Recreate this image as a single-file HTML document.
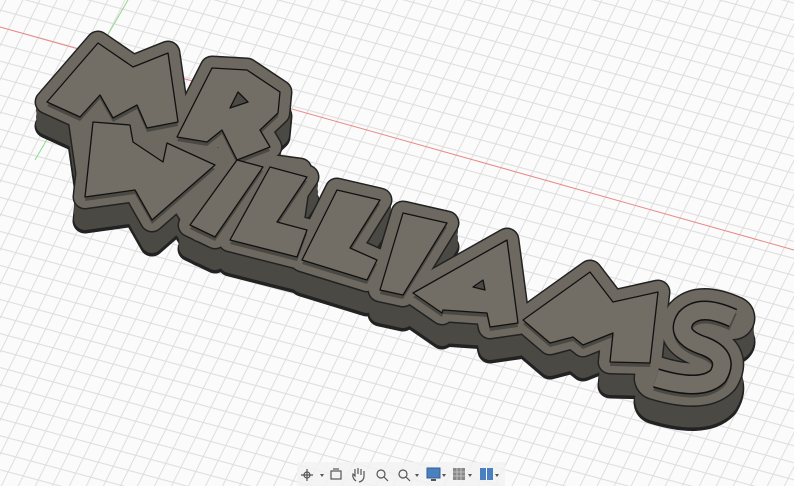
<!DOCTYPE html>
<html><head><meta charset="utf-8"><style>
html,body{margin:0;padding:0;width:794px;height:486px;overflow:hidden;background:#fbfbfb}
svg{display:block}
</style></head><body>
<svg width="794" height="486" viewBox="0 0 794 486" xmlns="http://www.w3.org/2000/svg">
<defs>
<pattern id="g" width="15" height="15" patternUnits="userSpaceOnUse" patternTransform="matrix(1,0.27,-0.5,1,128,27)">
<path d="M0 0.5H15M0.5 0V15" stroke="#dedede" stroke-width="1" fill="none"/>
</pattern>
<g id="L">
<path d="M47,102 L98,43 L133,67 L168,53 L178,122 L147,128 L137,105 L113,118 L100,95 L80,117Z"/>
<path d="M177,137 L212,68 L247,70 L280,92 L278,113 L260,130 L270,147 L237,160 L222,130 L207,142Z"/>
<path d="M85,197 L93,122 L130,125 L133,142 L163,162 L167,143 L215,165 L152,220 L135,190Z"/>
<path d="M190,225 L237,160 L263,167 L215,237Z"/>
<path d="M230,240 L270,167 L307,177 L277,222 L307,230 L297,257Z"/>
<path d="M302,260 L337,190 L380,200 L350,248 L377,260 L367,280Z"/>
<path d="M380,290 L403,213 L447,223 L403,295Z"/>
<path d="M413,293 L507,240 L518,323 L490,327 L487,313 L443,310 L442,313Z"/>
<path d="M523,320 L590,272 L613,302 L658,292 L650,363 L610,362 L613,333 L583,345 L573,337 L550,343Z"/>
<path d="M80,120 L180,120 L180,140 L90,190Z M150,150 L300,170 L290,240 L200,230Z"/>
</g>
<path id="S" d="M733,318 Q700,303 686,318 Q674,336 704,346 Q730,356 718,376 Q702,392 656,378" fill="none"/>
</defs>
<rect width="794" height="486" fill="#fbfbfb"/>
<rect width="794" height="486" fill="url(#g)"/>
<line x1="0" y1="27" x2="794" y2="250" stroke="#e88a8a" stroke-width="1"/>
<line x1="128" y1="0" x2="35" y2="160" stroke="#8fd88f" stroke-width="1"/>

<g stroke-linejoin="round" stroke-linecap="round">
<g transform="translate(0,24)" fill="#222" stroke="#222">
<use href="#L" stroke-width="25"/><use href="#S" stroke-width="45"/></g>
<g transform="translate(0,22)" fill="#4b4943" stroke="#4b4943">
<use href="#L" stroke-width="22"/><use href="#S" stroke-width="42"/></g>
<g transform="translate(0,15)" fill="#4b4943" stroke="#4b4943">
<use href="#L" stroke-width="22"/><use href="#S" stroke-width="42"/></g>
<g transform="translate(0,8)" fill="#4b4943" stroke="#4b4943">
<use href="#L" stroke-width="22"/><use href="#S" stroke-width="42"/></g>
<g transform="translate(0,2)" fill="#4b4943" stroke="#4b4943">
<use href="#L" stroke-width="22"/><use href="#S" stroke-width="42"/></g>
<g fill="#222" stroke="#222">
<use href="#L" stroke-width="25"/><use href="#S" stroke-width="45"/></g>
<g fill="#6d6960" stroke="#6d6960">
<use href="#L" stroke-width="22"/><use href="#S" stroke-width="42"/></g>
</g>

<g transform="translate(0,4)" fill="#4b4943">
<path d="M47,102 L98,43 L133,67 L168,53 L178,122 L147,128 L137,105 L113,118 L100,95 L80,117Z"/>
<path d="M177,137 L212,68 L247,70 L280,92 L278,113 L260,130 L270,147 L237,160 L222,130 L207,142Z"/>
<path d="M85,197 L93,122 L130,125 L133,142 L163,162 L167,143 L215,165 L152,220 L135,190Z"/>
<path d="M190,225 L237,160 L263,167 L215,237Z"/>
<path d="M230,240 L270,167 L307,177 L277,222 L307,230 L297,257Z"/>
<path d="M302,260 L337,190 L380,200 L350,248 L377,260 L367,280Z"/>
<path d="M380,290 L403,213 L447,223 L403,295Z"/>
<path d="M413,293 L507,240 L518,323 L490,327 L487,313 L443,310 L442,313Z"/>
<path d="M523,320 L590,272 L613,302 L658,292 L650,363 L610,362 L613,333 L583,345 L573,337 L550,343Z"/>
<use href="#S" stroke="#4b4943" stroke-width="18"/>
</g>
<use href="#S" stroke="#111" stroke-width="20" stroke-linecap="butt"/>
<use href="#S" stroke="#726e65" stroke-width="17" stroke-linecap="butt"/>
<g fill="#726e65" stroke="#111" stroke-width="1.3" stroke-linejoin="round">
<path d="M47,102 L98,43 L133,67 L168,53 L178,122 L147,128 L137,105 L113,118 L100,95 L80,117Z"/>
<path d="M177,137 L212,68 L247,70 L280,92 L278,113 L260,130 L270,147 L237,160 L222,130 L207,142Z M230,108 L238,92 L248,102Z" fill-rule="evenodd"/>
<path d="M85,197 L93,122 L130,125 L133,142 L163,162 L167,143 L215,165 L152,220 L135,190Z"/>
<path d="M190,225 L237,160 L263,167 L215,237Z"/>
<path d="M230,240 L270,167 L307,177 L277,222 L307,230 L297,257Z"/>
<path d="M302,260 L337,190 L380,200 L350,248 L377,260 L367,280Z"/>
<path d="M380,290 L403,213 L447,223 L403,295Z"/>
<path d="M413,293 L507,240 L518,323 L490,327 L487,313 L443,310 L442,313Z M473,287 L483,280 L485,290Z" fill-rule="evenodd"/>
<path d="M523,320 L590,272 L613,302 L658,292 L650,363 L610,362 L613,333 L583,345 L573,337 L550,343Z"/>
</g>

<!-- toolbar -->
<rect x="297" y="462" width="208" height="24" fill="#f2f2f2" opacity="0.85"/>
<g fill="none" stroke="#555" stroke-width="1.2">
<path d="M307,469 V481 M301,475 H313"/><circle cx="307" cy="475" r="3"/>
<rect x="331" y="471" width="10" height="8"/><path d="M333,469 h6"/>
<path d="M356,481 q-4,-3 -3,-7 l2,2 v-7 M358,468 v6 M361,469 v6 M364,471 v5 q0,5 -5,6"/>
<circle cx="381" cy="474" r="4"/><path d="M384,477 l4,4"/>
<circle cx="403" cy="474" r="4"/><path d="M406,477 l4,4"/>
</g>
<g fill="#555">
<path d="M320,474 l4,0 l-2,3z M415,474 l4,0 l-2,3z M442,474 l4,0 l-2,3z M468,474 l4,0 l-2,3z M495,474 l4,0 l-2,3z"/>
</g>
<rect x="427" y="468" width="13" height="10" fill="#4a7fc0" stroke="#2f5f99"/>
<rect x="431" y="479" width="5" height="2" fill="#555"/>
<rect x="453" y="468" width="12" height="12" fill="#888"/>
<path d="M453,472 h12 M453,476 h12 M457,468 v12 M461,468 v12" stroke="#ccc" stroke-width="0.8"/>
<rect x="480" y="468" width="13" height="12" fill="#4a7fc0"/>
<path d="M486.5,468 v12" stroke="#fff" stroke-width="1"/>
</svg>
</body></html>
